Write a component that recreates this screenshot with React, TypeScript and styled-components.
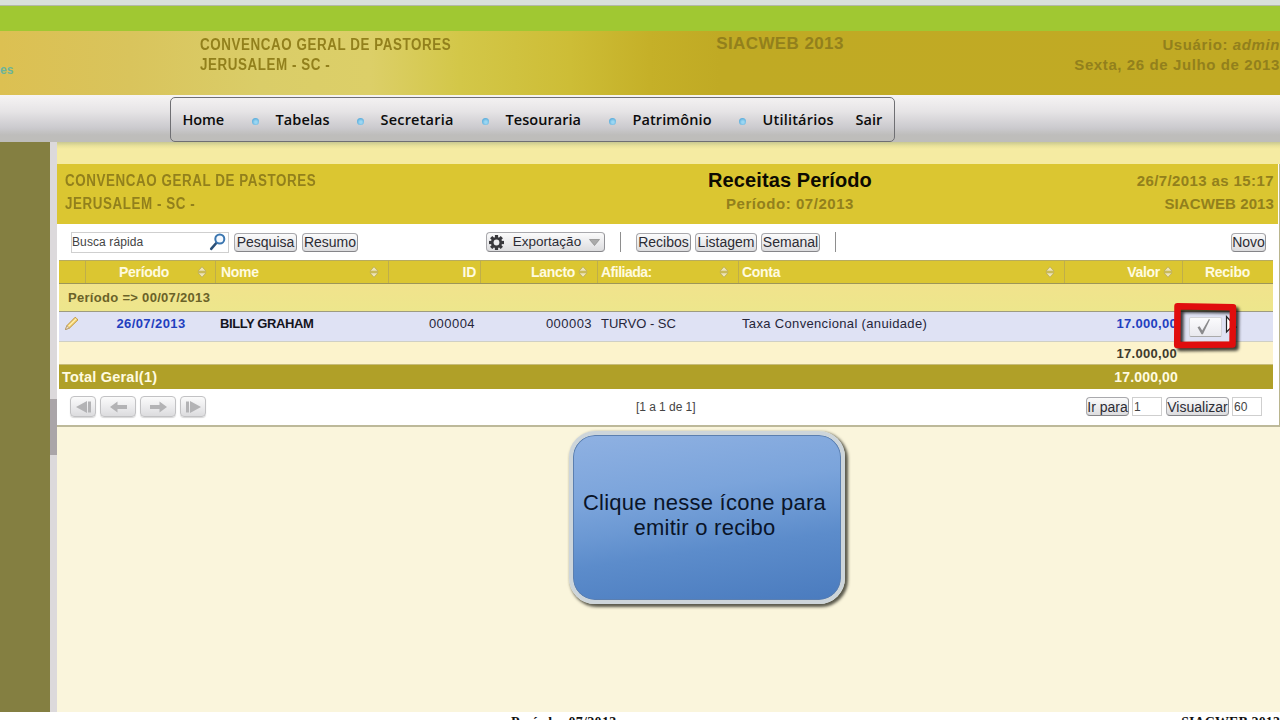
import React from "react";
import styled, { createGlobalStyle, css } from "styled-components";

const GlobalStyle = createGlobalStyle`
  *, *::before, *::after { box-sizing: border-box; }
  body { margin: 0; overflow: hidden; font-family: "Liberation Sans", Arial, sans-serif; }
`;

type TextProps = { $size?: number; $track?: number; $color?: string };

const textStyle = css<TextProps>`
  ${(p) => p.$size && `font-size: ${p.$size}px;`}
  ${(p) => p.$track !== undefined && `letter-spacing: ${p.$track}px;`}
  ${(p) => p.$color && `color: ${p.$color};`}
  white-space: nowrap;
`;

const Page = styled.div`
  position: relative;
  display: flex;
  flex-direction: column;
  width: 1280px;
  height: 720px;
  overflow: hidden;
  background: #fff;
`;

const BrowserEdge = styled.div`
  flex: none;
  height: 6px;
  background: #d9e0da;
  border-bottom: 1px solid #b4b9a6;
`;

const GreenBar = styled.div`
  flex: none;
  height: 25px;
  background: #a0c832;
`;

const Banner = styled.header`
  flex: none;
  display: grid;
  grid-template-columns: 200px 380px 400px 1fr;
  height: 64px;
  padding: 4px 0 0;
  font-weight: bold;
  line-height: 20px;
  color: #92801c;
  background:
    linear-gradient(90deg, #dcc052 0, #d9c45c 130px, #dacd68 260px, #dccf68 370px, #d3c748 460px, #cdbd36 570px, #c5b028 650px, #c0aa24 720px, #c1aa24 100%);
`;

const LogoTail = styled.span`
  padding-top: 25px;
  font-size: 12px;
  color: #6cb49a;
`;

const BannerLines = styled.div<{ $align?: string }>`
  display: flex;
  flex-direction: column;
  align-items: ${(p) => p.$align || "flex-start"};
`;

const SystemName = styled(BannerLines)`
  margin-top: -1px;
`;

const Line = styled.span<TextProps>`
  ${textStyle}
`;

const CompanyLine = styled.span`
  font-size: 16px;
  letter-spacing: 0.68px;
  white-space: nowrap;
  transform: scaleX(0.837);
  transform-origin: left center;
`;

const MenuBar = styled.nav`
  flex: none;
  height: 47px;
  padding: 2px 0 0 170px;
  background: linear-gradient(#f6f4f4, #e6e4e6 35%, #cbcace 70%, #bebdbb 85%, #bebdba);
`;

const Menu = styled.ul`
  display: grid;
  grid-template-columns: 93px 105px 125px 127px 130px 93px auto;
  align-items: center;
  width: 725px;
  height: 45px;
  margin: 0;
  padding: 0 0 0 11.5px;
  list-style: none;
  border: 1px solid #6f6f73;
  border-radius: 5px;
`;

const MenuItem = styled.li<{ $track: number }>`
  display: flex;
  align-items: center;
  font: 600 14.5px/20px "Open Sans", "Trebuchet MS", sans-serif;
  letter-spacing: ${(p) => p.$track}px;
  color: #0c0c0c;
  white-space: nowrap;
`;

const Dot = styled.i`
  width: 7px;
  height: 7px;
  margin: 3px 17px 0 auto;
  border-radius: 50%;
  background: radial-gradient(circle at 55% 60%, #9ad6f2 20%, #55aadb 75%);
`;

const Body = styled.div`
  flex: none;
  display: flex;
  height: 570px;
`;

const Sidebar = styled.aside`
  width: 50px;
  background: #847f41;
`;

const ScrollTrack = styled.div`
  width: 7px;
  padding-top: 257px;
  background: #dcd9db;
`;

const ScrollThumb = styled.div`
  height: 56px;
  background: #aaa5a8;
`;

const Content = styled.main`
  flex: 1;
  background: #faf5dc;
`;

const TopStrip = styled.div`
  height: 22px;
  background: linear-gradient(#c9c891, #eae29a 4px, #f5eba2 7px, #f5eba2);
`;

const Report = styled.section`
  height: 263px;
  padding: 0 1px 0 1px;
  background: #fff;
  border-right: 1px solid #b9b58e;
  border-bottom: 2px solid #bdb99a;
`;

const ReportHeader = styled.div`
  display: grid;
  grid-template-columns: 525px 400px 1fr;
  height: 60px;
  margin: 0 0 0 -1px;
  padding: 5px 4px 0 8px;
  font-weight: bold;
  line-height: 23px;
  color: #92801c;
  background: #dbc631;
`;

const Toolbar = styled.div`
  display: flex;
  align-items: center;
  height: 36px;
  padding: 0 12px 0 13px;
`;

const Spacer = styled.div<{ $w?: number }>`
  ${(p) => (p.$w ? `width: ${p.$w}px; flex: none;` : "flex: 1;")}
`;

const SearchBox = styled.div`
  display: flex;
  align-items: center;
  justify-content: space-between;
  width: 158px;
  height: 21px;
  padding: 0 1px 0 0;
  font-size: 12px;
  letter-spacing: 0.1px;
  color: #444;
  border: 1px solid #cfcfcf;
`;

const Button = styled.button<{ $w: number; $h?: number }>`
  flex: none;
  display: flex;
  align-items: center;
  justify-content: center;
  width: ${(p) => p.$w}px;
  height: ${(p) => p.$h || 19}px;
  padding: 0;
  font: 14px/16px "Liberation Sans", Arial, sans-serif;
  color: #2c2c34;
  white-space: nowrap;
  background: linear-gradient(#fbfbfb, #e9e9eb 60%, #dcdcde);
  border: 1px solid #a9a9ad;
  border-bottom-color: #858589;
  border-right-color: #929296;
  border-radius: 4px;
`;

const ExportButton = styled(Button)`
  justify-content: space-between;
  padding: 0 4px 0 1px;
  font-size: 13.5px;
`;

const NavButton = styled(Button)`
  border-color: #c2c2c4;
  border-radius: 4px;
  box-shadow: 0 1px 1px #d8d8d8;
`;

const Divider = styled.div`
  width: 1px;
  height: 20px;
  background: #8e8e8e;
`;

const columns = "27px 130px 173px 92px 117px 141px 326px 118px 90px";

const Table = styled.div`
  width: 1214px;
  margin-left: 1px;
`;

const HeadRow = styled.div`
  display: grid;
  grid-template-columns: ${columns};
  height: 24px;
  font-size: 14px;
  font-weight: bold;
  color: #fffbe0;
  background: #dbc631;
  border-top: 1px solid #b7ab5f;
  border-bottom: 1px solid #9d9658;
`;

const HeadCell = styled.div<{ $align?: string; $gap?: number; $pr?: number; $pl?: number; $track?: number }>`
  display: flex;
  align-items: center;
  justify-content: ${(p) => p.$align || "space-between"};
  gap: ${(p) => p.$gap || 0}px;
  padding: 0 ${(p) => p.$pr ?? 9}px 0 ${(p) => p.$pl ?? 4}px;
  letter-spacing: ${(p) => p.$track ?? -0.3}px;
  border-right: 1px solid #bfae4a;
  white-space: nowrap;
  &:last-child { border-right: 0; }
`;

const GroupRow = styled.div`
  height: 27px;
  padding-left: 9px;
  font-size: 13px;
  font-weight: bold;
  line-height: 27px;
  letter-spacing: 0.3px;
  color: #6a6228;
  background: linear-gradient(#f1e38c, #ede68c);
`;

const DataRow = styled.div`
  display: grid;
  grid-template-columns: ${columns};
  height: 31px;
  font-size: 13px;
  line-height: 23px;
  color: #26263a;
  background: #dfe2f4;
  border-top: 1px solid #9d9b80;
  border-bottom: 1px solid #cfcfc4;
`;

const Cell = styled.div<TextProps & { $align?: string; $bold?: boolean; $pr?: number; $pl?: number }>`
  ${textStyle}
  padding: 0 ${(p) => p.$pr ?? 6}px 0 ${(p) => p.$pl ?? 3}px;
  text-align: ${(p) => p.$align || "left"};
  font-weight: ${(p) => (p.$bold ? "bold" : "normal")};
`;

const EditCell = styled.div`
  padding: 3px 0 0 5px;
  line-height: 0;
`;

const SubtotalRow = styled.div`
  height: 22px;
  padding-right: 96px;
  font-size: 13px;
  font-weight: bold;
  line-height: 23px;
  letter-spacing: 0.3px;
  text-align: right;
  color: #3e3a2c;
  background: #fcf3cc;
`;

const TotalRow = styled.div`
  display: flex;
  justify-content: space-between;
  height: 25px;
  padding: 0 95px 0 3px;
  font-size: 14px;
  font-weight: bold;
  line-height: 25px;
  color: #fffbe0;
  background: #b0a028;
  border-top: 1px solid #c7bc78;
`;

const Pager = styled.div`
  display: flex;
  align-items: center;
  height: 35px;
  padding: 0 16px 0 12px;
`;

const PageRange = styled.span`
  font-size: 12px;
  letter-spacing: -0.05px;
  color: #444;
`;

const NumberBox = styled.div`
  width: 30px;
  height: 19px;
  padding-left: 1px;
  font-size: 12px;
  line-height: 18px;
  color: #444;
  border: 1px solid #cfcfcf;
`;

const NextPage = styled.footer`
  display: flex;
  justify-content: space-between;
  height: 8px;
  padding: 3px 0 0 511px;
  overflow: hidden;
  font: bold 14px/16px "Liberation Serif", "Times New Roman", serif;
  color: #111;
`;

const ReceiptButton = styled.div`
  display: flex;
  align-items: center;
  width: 33px;
  height: 20px;
  margin: 5px 0 0 6px;
  padding-left: 6px;
  background: linear-gradient(#fbfbfd, #e9e9ee);
  border: 1px solid #d3d3d8;
  border-bottom-color: #aaa;
  border-radius: 2px;
`;

const Highlight = styled.svg`
  position: absolute;
  left: 1168px;
  top: 298px;
  filter: drop-shadow(3px 3px 1.5px rgba(0, 0, 0, 0.75));
`;

const Pointer = styled.svg`
  position: absolute;
  left: 1225px;
  top: 315px;
`;

const Callout = styled.div`
  position: absolute;
  left: 569px;
  top: 431px;
  display: flex;
  align-items: center;
  justify-content: center;
  width: 276px;
  height: 173px;
  padding: 0 5px 5px 0;
  border: 4px solid #cdd5da;
  border-radius: 26px;
  background: linear-gradient(172deg, #8fb1e2, #7ba4db 35%, #6b98d3 52%, #5c8ccb 66%, #4a7bbe) padding-box;
  box-shadow: inset 0 0 0 1px #5b7fb0, 2px 2px 3px 1px rgba(50, 50, 40, 0.8);
  font-size: 22px;
  line-height: 25px;
  letter-spacing: 0.26px;
  text-align: center;
  color: #0a1428;
`;

const SortIcon = () => (
  <svg width="10" height="12" viewBox="0 0 10 12">
    <path d="M5 .8 9 5.200H1z" fill="#efe5b4" stroke="#b3a660" strokeWidth=".7" />
    <path d="M5 11.200 9 6.800H1z" fill="#efe5b4" stroke="#b3a660" strokeWidth=".7" />
  </svg>
);

const SearchIcon = () => (
  <svg width="18" height="18" viewBox="0 0 18 18" fill="none">
    <path d="M7.300 10 2.200 15.800" stroke="#2b5078" strokeWidth="2.600" strokeLinecap="round" />
    <circle cx="10.800" cy="6" r="4.500" fill="#f4f9ff" stroke="#3b76b0" strokeWidth="2" />
  </svg>
);

const GearIcon = () => (
  <svg width="17" height="17" viewBox="-8.500 -8.500 17 17">
    {[0, 45, 90, 135].map((a) => (
      <rect key={a} x="-1.600" y="-7.500" width="3.200" height="15" fill="#38383c" transform={`rotate(${a})`} />
    ))}
    <circle r="5.600" fill="#38383c" />
    <circle r="2.900" fill="#ececee" />
  </svg>
);

const PencilIcon = () => (
  <svg width="16" height="16" viewBox="0 0 16 16">
    <path d="M1.500 14.500 3 10.500 11.200 2.200 14 4.800 5.600 13z" fill="#f3d06a" stroke="#b98e3a" strokeWidth=".9" />
    <path d="M4.300 11.500 12.300 3.600" stroke="#fff0b4" strokeWidth="1.200" />
    <path d="M1.500 14.500 2.900 10.700 5.400 13z" fill="#f0e2cc" stroke="#a88f68" strokeWidth=".6" />
  </svg>
);

const CheckIcon = () => (
  <svg width="16" height="18" viewBox="0 0 16 18">
    <path d="M1.500 9.300 3.600 8.200 6.200 12.400 12.900 1 14 1.500 6.900 16.300 5.500 16.300z" fill="#8b8b8d" />
  </svg>
);

const arrows: Record<string, { w: number; d: string }> = {
  first: { w: 26, d: "M12 1v12L1 7zM13 1.500h3v11h-3z" },
  prev: { w: 36, d: "M0 7 7.500 1.500V5H17v4H7.500v3.500z" },
  next: { w: 36, d: "M17 7 9.500 1.500V5H0v4h9.500v3.500z" },
  last: { w: 26, d: "M5 1v12L16 7zM1 1.500h3v11H1z" },
};

const ArrowButton = ({ kind }: { kind: string }) => (
  <NavButton $w={arrows[kind].w} $h={21}>
    <svg width="17" height="14" viewBox="0 0 17 14">
      <path d={arrows[kind].d} fill="#b3b3b5" />
    </svg>
  </NavButton>
);

const menuItems: [string, number][] = [
  ["Home", -0.1],
  ["Tabelas", 0.1],
  ["Secretaria", 0.2],
  ["Tesouraria", 0.05],
  ["Patrimônio", 0.1],
  ["Utilitários", 0.2],
  ["Sair", 0],
];

export default function App() {
  return (
    <Page>
      <GlobalStyle />
      <BrowserEdge />
      <GreenBar />
      <Banner>
        <LogoTail>es</LogoTail>
        <BannerLines>
          <CompanyLine>CONVENCAO GERAL DE PASTORES</CompanyLine>
          <CompanyLine>JERUSALEM - SC -</CompanyLine>
        </BannerLines>
        <SystemName $align="center">
          <Line $size={17} $track={0.4}>SIACWEB 2013</Line>
        </SystemName>
        <BannerLines $align="flex-end">
          <Line $size={15} $track={0.6}>Usuário: <em>admin</em></Line>
          <Line $size={15} $track={0.6}>Sexta, 26 de Julho de 2013</Line>
        </BannerLines>
      </Banner>
      <MenuBar>
        <Menu>
          {menuItems.map(([label, track], i) => (
            <MenuItem key={label} $track={track}>
              {label}
              {i < 5 && <Dot />}
            </MenuItem>
          ))}
        </Menu>
      </MenuBar>
      <Body>
        <Sidebar />
        <ScrollTrack><ScrollThumb /></ScrollTrack>
        <Content>
          <TopStrip />
          <Report>
            <ReportHeader>
              <BannerLines>
                <CompanyLine>CONVENCAO GERAL DE PASTORES</CompanyLine>
                <CompanyLine>JERUSALEM - SC -</CompanyLine>
              </BannerLines>
              <BannerLines $align="center">
                <Line $size={20} $track={0.1} $color="#0c0a02">Receitas Período</Line>
                <Line $size={15} $track={0.55}>Período: 07/2013</Line>
              </BannerLines>
              <BannerLines $align="flex-end">
                <Line $size={15} $track={0.4}>26/7/2013 as 15:17</Line>
                <Line $size={15} $track={0.1}>SIACWEB 2013</Line>
              </BannerLines>
            </ReportHeader>
            <Toolbar>
              <SearchBox>Busca rápida<SearchIcon /></SearchBox>
              <Spacer $w={5} />
              <Button $w={63}>Pesquisa</Button>
              <Spacer $w={5} />
              <Button $w={56}>Resumo</Button>
              <Spacer $w={128} />
              <ExportButton $w={119} $h={20}>
                <GearIcon />
                Exportação
                <svg width="11" height="7" viewBox="0 0 11 7">
                  <path d="M.5.500h10L5.500 6.500z" fill="#aaa" stroke="#888" strokeWidth=".7" />
                </svg>
              </ExportButton>
              <Spacer $w={15} />
              <Divider />
              <Spacer $w={15} />
              <Button $w={55}>Recibos</Button>
              <Spacer $w={4} />
              <Button $w={62}>Listagem</Button>
              <Spacer $w={4} />
              <Button $w={59}>Semanal</Button>
              <Spacer $w={15} />
              <Divider />
              <Spacer />
              <Button $w={35}>Novo</Button>
            </Toolbar>
            <Table>
              <HeadRow>
                <HeadCell />
                <HeadCell $align="flex-end" $gap={28} $pr={8}>Período<SortIcon /></HeadCell>
                <HeadCell $pl={5}>Nome<SortIcon /></HeadCell>
                <HeadCell $align="flex-end" $pr={4}>ID</HeadCell>
                <HeadCell $align="flex-end" $gap={3} $pr={9}>Lancto<SortIcon /></HeadCell>
                <HeadCell $pl={3} $track={-0.5}>Afiliada:<SortIcon /></HeadCell>
                <HeadCell $pl={3}>Conta<SortIcon /></HeadCell>
                <HeadCell $align="flex-end" $gap={3}>Valor<SortIcon /></HeadCell>
                <HeadCell $align="center" $pr={5}>Recibo</HeadCell>
              </HeadRow>
              <GroupRow>Período =&gt; 00/07/2013</GroupRow>
              <DataRow>
                <EditCell><PencilIcon /></EditCell>
                <Cell $align="center" $bold $track={0.4} $pl={6} $color="#1f3fbf">26/07/2013</Cell>
                <Cell $bold $track={-0.4} $pl={4} $color="#14141e">BILLY GRAHAM</Cell>
                <Cell $align="right" $track={0.45}>000004</Cell>
                <Cell $align="right" $track={0.45}>000003</Cell>
                <Cell>TURVO - SC</Cell>
                <Cell $track={0.34}>Taxa Convencional (anuidade)</Cell>
                <Cell $align="right" $bold $track={0.3} $color="#1f3fbf">17.000,00</Cell>
                <ReceiptButton><CheckIcon /></ReceiptButton>
              </DataRow>
              <SubtotalRow>17.000,00</SubtotalRow>
              <TotalRow>
                <Line $size={14.5} $track={0.2}>Total Geral(1)</Line>
                <Line $track={0.15}>17.000,00</Line>
              </TotalRow>
            </Table>
            <Pager>
              <ArrowButton kind="first" />
              <Spacer $w={4} />
              <ArrowButton kind="prev" />
              <Spacer $w={4} />
              <ArrowButton kind="next" />
              <Spacer $w={4} />
              <ArrowButton kind="last" />
              <Spacer $w={430} />
              <PageRange>[1 a 1 de 1]</PageRange>
              <Spacer />
              <Button $w={43}>Ir para</Button>
              <Spacer $w={3} />
              <NumberBox>1</NumberBox>
              <Spacer $w={4} />
              <Button $w={63}>Visualizar</Button>
              <Spacer $w={3} />
              <NumberBox>60</NumberBox>
            </Pager>
          </Report>
        </Content>
      </Body>
      <NextPage>
        <Line $track={0.3}>Período: 07/2013</Line>
        <Line $track={0.1}>SIACWEB 2013</Line>
      </NextPage>
      <Pointer width="12" height="20" viewBox="0 0 12 20">
        <path d="M1.500 1.500V17L5 13.500 7 17.500 9 16.500 7.500 12H11z" fill="#fff" stroke="#222" strokeWidth="1.200" />
      </Pointer>
      <Highlight width="74" height="56" viewBox="0 0 74 56">
        <path d="M9.500 8.300 65 9.200 64.500 46.500 9.200 47z" fill="none" stroke="#e00d0d" strokeWidth="6.500" strokeLinejoin="round" />
      </Highlight>
      <Callout>
        Clique nesse ícone para
        <br />
        emitir o recibo
      </Callout>
    </Page>
  );
}
